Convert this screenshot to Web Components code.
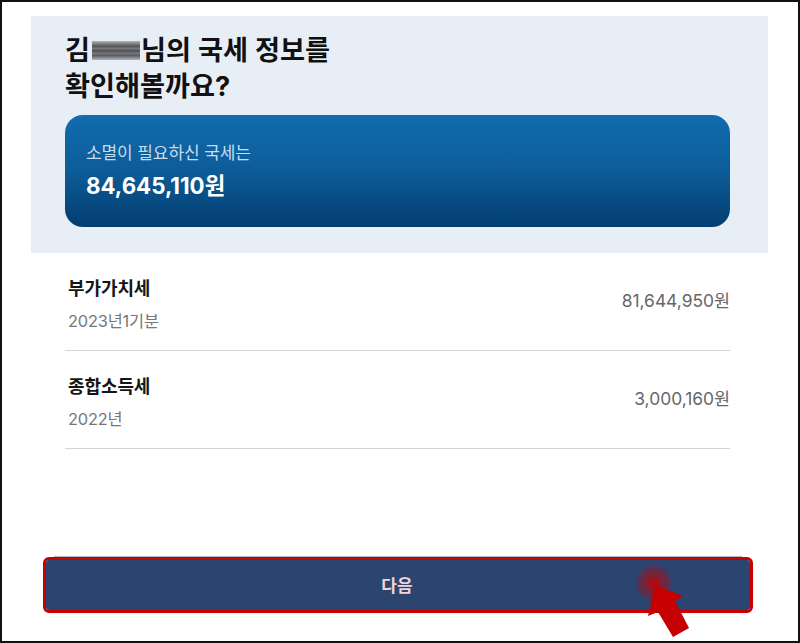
<!DOCTYPE html>
<html lang="ko">
<head>
<meta charset="utf-8">
<title>국세 정보</title>
<style>
	html, body { margin:0; padding:0; background:#fff; }
	body { font-family:Inter, "Noto Sans CJK KR", sans-serif; }
</style>
</head>
<body>
<tax-screen>
	<tax-summary total="84,645,110원" label="소멸이 필요하신 국세는"></tax-summary>
	<tax-row name="부가가치세" period="2023년1기분" amount="81,644,950원"></tax-row>
	<tax-row name="종합소득세" period="2022년" amount="3,000,160원"></tax-row>
	<next-button slot="footer">다음</next-button>
</tax-screen>

<script>
class TaxScreen extends HTMLElement {
	constructor() {
		super();
		this.attachShadow({mode:'open'}).innerHTML=`<style>
			:host {
				display:flex;
				flex-direction:column;
				box-sizing:border-box;
				width:800px;
				height:643px;
				border:2px solid #111;
				padding:14px 30px 0 29px;
				background:#fff;
			}
			.rows { flex:1; display:flex; flex-direction:column; }
		</style>
		<div class="rows"><slot></slot></div>
		<slot name="footer"></slot>`;
	}
}

class TaxSummary extends HTMLElement {
	constructor() {
		super();
		let root=this.attachShadow({mode:'open'});
		root.innerHTML=`<style>
			:host {
				display:block;
				box-sizing:border-box;
				height:237px;
				padding:17px 38px 0 34px;
				background:#e7eef5;
			}
			h1 {
				margin:0 0 10px 0;
				font-size:27.2px;
				line-height:36px;
				height:72px;
				font-weight:700;
				color:#111;
				word-spacing:.5px;
			}
			.blur {
				display:inline-block;
				width:48px;
				height:19px;
				margin:0 1px 0 2px;
				vertical-align:0;
				background:linear-gradient(180deg,#b4b6b9 0,#77797c 16%,#55575a 28%,#77797c 40%,#4c4e51 52%,#77797c 64%,#5a5c5f 76%,#85878a 88%,#b4b6b9 100%);
				filter:blur(.5px);
			}
			.card {
				box-sizing:border-box;
				height:112px;
				padding:26px 21px 0 21px;
				border-radius:18px;
				background:linear-gradient(180deg,#126cae 0%,#0d5c98 50%,#023d70 100%);
				color:#fff;
			}
			.label { font-size:17px; line-height:24px; color:#c9dced; letter-spacing:-0.1px; }
			.total { font-size:22.3px; line-height:32px; font-weight:700; margin-top:5px; }
		</style>
		<h1>김<span class="blur"></span>님의 국세 정보를<br>확인해볼까요?</h1>
		<div class="card">
			<div class="label"></div>
			<div class="total"></div>
		</div>`;
		root.querySelector(".label").textContent=this.getAttribute("label");
		root.querySelector(".total").textContent=this.getAttribute("total");
	}
}

class TaxRow extends HTMLElement {
	constructor() {
		super();
		let root=this.attachShadow({mode:'open'});
		root.innerHTML=`<style>
			:host {
				display:flex;
				box-sizing:border-box;
				height:98px;
				margin:0 38px 0 34px;
				padding:0 0 0 3px;
				align-items:center;
				justify-content:space-between;
				border-bottom:1px solid #d5d5d8;
			}
			.name { font-size:18px; line-height:24px; font-weight:700; color:#151515; letter-spacing:-0.1px; }
			.period { font-size:16.4px; line-height:24px; color:#77777a; margin-top:8px; letter-spacing:-0.2px; }
			.amount { font-size:17.4px; color:#66666a; margin-top:-4px; }
			.text { margin-top:7px; }
		</style>
		<div class="text">
			<div class="name"></div>
			<div class="period"></div>
		</div>
		<div class="amount"></div>`;
		root.querySelector(".name").textContent=this.getAttribute("name");
		root.querySelector(".period").textContent=this.getAttribute("period");
		root.querySelector(".amount").textContent=this.getAttribute("amount");
	}
}

class NextButton extends HTMLElement {
	constructor() {
		super();
		this.attachShadow({mode:'open'}).innerHTML=`<style>
			:host {
				display:flex;
				position:relative;
				box-sizing:border-box;
				height:56px;
				margin:0 15px 28px 12px;
				border:3px solid #c80000;
				border-radius:6px;
				background:#cfd6df;
				color:#f0d4d6;
				font-size:17px;
				font-weight:700;
			}
			:host::before {
				content:"";
				position:absolute;
				top:-4px;
				left:8px;
				right:8px;
				height:1px;
				background:#a9bccf;
			}
			.fill {
				flex:1;
				display:flex;
				align-items:center;
				justify-content:center;
				border-radius:3px;
				background:#2b4570;
			}
			span { position:relative; left:-1px; top:-1px; }
			svg { position:absolute; left:589px; top:4px; overflow:visible; }
		</style>
		<div class="fill"><span><slot></slot></span></div>
		<svg width="60" height="80" viewBox="0 0 60 80">
			<circle cx="19" cy="19" r="17" fill="#c80000" opacity=".3"/>
			<circle cx="19" cy="19" r="12" fill="#c80000" opacity=".25"/>
			<circle cx="19" cy="19" r="6" fill="#c80000" opacity=".6"/>
			<path d="M20 21 L48 32 L40 37 L54 64 L38 73 L23 48 L13 52 Z" fill="#c60000"/>
		</svg>`;
	}
}

customElements.define("tax-screen", TaxScreen);
customElements.define("tax-summary", TaxSummary);
customElements.define("tax-row", TaxRow);
customElements.define("next-button", NextButton);
</script>
</body>
</html>
